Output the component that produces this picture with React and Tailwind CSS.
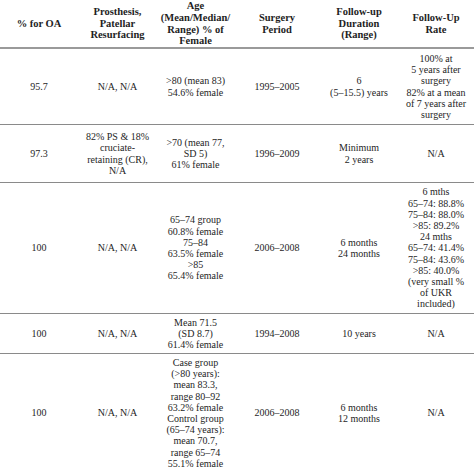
const cols = "grid grid-cols-[78px_79px_77px_86px_78px_76px]";

const header = [
  ["% for OA"],
  ["Prosthesis,", "Patellar", "Resurfacing"],
  ["Age", "(Mean/Median/", "Range) % of", "Female"],
  ["Surgery", "Period"],
  ["Follow-up", "Duration", "(Range)"],
  ["Follow-Up", "Rate"],
];

const rows = [
  {
    h: "h-[75px]",
    cells: [
      ["95.7"],
      ["N/A, N/A"],
      [">80 (mean 83)", "54.6% female"],
      ["1995–2005"],
      ["6", "(5–15.5) years"],
      ["100% at", "5 years after", "surgery", "82% at a mean", "of 7 years after", "surgery"],
    ],
  },
  {
    h: "h-[57px]",
    cells: [
      ["97.3"],
      ["82% PS & 18%", "cruciate-", "retaining (CR),", "N/A"],
      [">70 (mean 77,", "SD 5)", "61% female"],
      ["1996–2009"],
      ["Minimum", "2 years"],
      ["N/A"],
    ],
  },
  {
    h: "h-[130px]",
    cells: [
      ["100"],
      ["N/A, N/A"],
      ["65–74 group", "60.8% female", "75–84", "63.5% female", ">85", "65.4% female"],
      ["2006–2008"],
      ["6 months", "24 months"],
      [
        "6 mths",
        "65–74: 88.8%",
        "75–84: 88.0%",
        ">85: 89.2%",
        "24 mths",
        "65–74: 41.4%",
        "75–84: 43.6%",
        ">85: 40.0%",
        "(very small %",
        "of UKR",
        "included)",
      ],
    ],
  },
  {
    h: "h-[39px]",
    cells: [
      ["100"],
      ["N/A, N/A"],
      ["Mean 71.5", "(SD 8.7)", "61.4% female"],
      ["1994–2008"],
      ["10 years"],
      ["N/A"],
    ],
  },
  {
    h: "h-[118px]",
    cells: [
      ["100"],
      ["N/A, N/A"],
      [
        "Case group",
        "(>80 years):",
        "mean 83.3,",
        "range 80–92",
        "63.2% female",
        "Control group",
        "(65–74 years):",
        "mean 70.7,",
        "range 65–74",
        "55.1% female",
      ],
      ["2006–2008"],
      ["6 months", "12 months"],
      ["N/A"],
    ],
  },
];

const Cell = ({ lines }) => (
  <div className="flex flex-col items-center justify-center text-center whitespace-nowrap">
    {lines.map((l, i) => (
      <span key={i}>{l}</span>
    ))}
  </div>
);

export default function App() {
  return (
    <div className="w-[474px] h-[474px] overflow-hidden bg-white text-[#1e1e1e] text-[10px] leading-[11.2px] font-['Liberation_Serif',serif]">
      <div className={`${cols} h-[47px] font-bold text-[10.5px] leading-[11.6px] items-center`}>
        {header.map((c, i) => (
          <Cell key={i} lines={c} />
        ))}
      </div>
      <div className="h-[2px] bg-[#9a9a9a]" />
      {rows.map((r, i) => (
        <div key={i}>
          {i > 0 && <div className="h-px bg-[#8a8a8a]" />}
          <div className={`${cols} ${r.h}`}>
            {r.cells.map((c, j) => (
              <Cell key={j} lines={c} />
            ))}
          </div>
        </div>
      ))}
    </div>
  );
}
